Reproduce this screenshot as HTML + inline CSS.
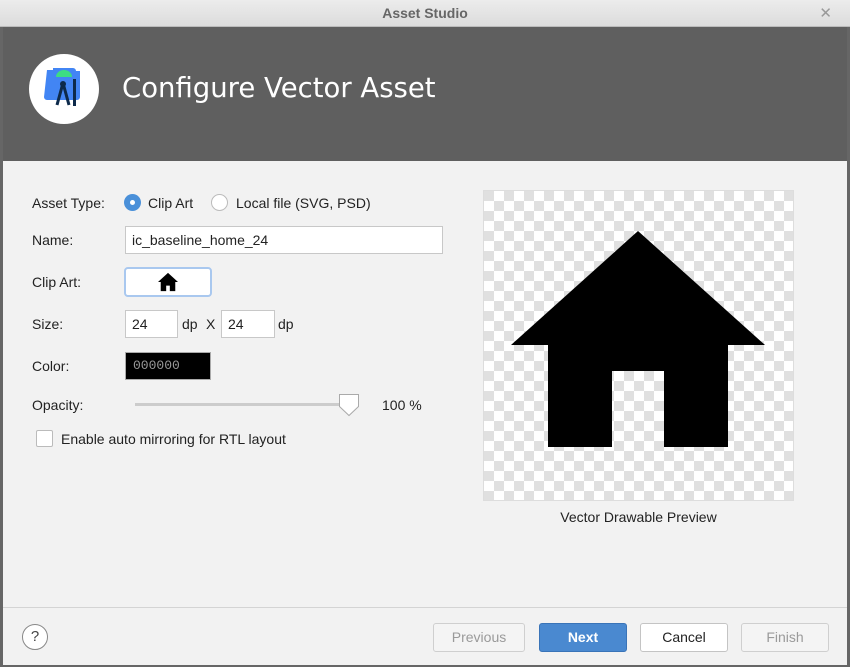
<!DOCTYPE html>
<html><head><style>
*{margin:0;padding:0;box-sizing:border-box}
body{width:850px;height:667px;background:#f2f2f2;font-family:"Liberation Sans",sans-serif;font-size:14px;color:#222;position:relative;overflow:hidden}
.abs{position:absolute}
.lbl{position:absolute;left:32px;font-size:14px}
.inp{position:absolute;background:#fff;border:1px solid #c8c8c8;font-size:14px;padding-left:6px;line-height:26px}
.btn{position:absolute;top:623px;height:29px;border:1px solid #cfcfcf;border-radius:3px;text-align:center;line-height:27px;font-size:14px;background:#f4f4f4;color:#9a9a9a}
</style></head><body>
<div class="abs" style="left:0;top:0;width:850px;height:27px;background:linear-gradient(#ececec,#dcdcdc);border-bottom:1px solid #bbb;text-align:center;line-height:27px;font-weight:bold;color:#666;font-size:14px">Asset Studio</div>
<div class="abs" style="right:18px;top:4px;color:#999;font-size:15px">✕</div>
<div class="abs" style="left:0;top:27px;width:3px;height:640px;background:#666"></div>
<div class="abs" style="right:0;top:27px;width:3px;height:640px;background:#666"></div>
<div class="abs" style="left:0;bottom:0;width:850px;height:2px;background:#666"></div>
<div class="abs" style="left:3px;top:27px;width:844px;height:134px;background:#5f5f5f"></div>
<div class="abs" style="left:29px;top:54px;width:70px;height:70px;border-radius:50%;background:#fff"></div>
<svg class="abs" style="left:29px;top:54px" width="70" height="70" viewBox="0 0 70 70">
<path d="M18 16 h6 v-2 h20 a3 3 0 0 1 3 3 v0 h4 v26 a3 3 0 0 1 -3 3 h-30 a3 3 0 0 1 -3 -3 z" fill="#4285f4"/>
<path d="M27 23 a8 7 0 0 1 16 0 z" fill="#3ddc84"/>
<path d="M34 29 l-6 22 M34 29 l6 22" stroke="#0d2a4b" stroke-width="3" fill="none"/>
<rect x="44" y="25" width="3" height="27" fill="#0d2a4b"/>
<circle cx="34" cy="30" r="3" fill="#0d2a4b"/>
</svg>
<div class="abs" style="left:122px;top:72px;font-size:27.5px;color:#fff;font-family:'DejaVu Sans',sans-serif">Configure Vector Asset</div>
<div class="lbl" style="top:195px">Asset Type:</div>
<div class="abs" style="left:124px;top:194px;width:17px;height:17px;border-radius:50%;background:#4a90d9"><div style="margin:6px;width:5px;height:5px;border-radius:50%;background:#fff"></div></div>
<div class="abs" style="left:148px;top:195px">Clip Art</div>
<div class="abs" style="left:211px;top:194px;width:17px;height:17px;border-radius:50%;background:#fff;border:1px solid #bbb"></div>
<div class="abs" style="left:236px;top:195px">Local file (SVG, PSD)</div>
<div class="lbl" style="top:232px">Name:</div>
<div class="inp" style="left:125px;top:226px;width:318px;height:28px">ic_baseline_home_24</div>
<div class="lbl" style="top:274px">Clip Art:</div>
<div class="abs" style="left:124px;top:267px;width:88px;height:30px;background:#fff;border:2px solid #a9c8ef;border-radius:4px"></div>
<svg class="abs" style="left:157px;top:272px" width="22" height="20" viewBox="0 0 24 22"><path d="M12 1 L1 11 h3 v10 h6 v-6 h4 v6 h6 v-10 h3z" fill="#000"/></svg>
<div class="lbl" style="top:316px">Size:</div>
<div class="inp" style="left:125px;top:310px;width:53px;height:28px">24</div>
<div class="abs" style="left:182px;top:316px">dp</div>
<div class="abs" style="left:206px;top:316px">X</div>
<div class="inp" style="left:221px;top:310px;width:54px;height:28px">24</div>
<div class="abs" style="left:278px;top:316px">dp</div>
<div class="lbl" style="top:358px">Color:</div>
<div class="abs" style="left:125px;top:352px;width:86px;height:28px;background:#000;border:1px solid #aaa;color:#999;font-family:'Liberation Mono',monospace;font-size:13px;line-height:26px;padding-left:7px">000000</div>
<div class="lbl" style="top:397px">Opacity:</div>
<div class="abs" style="left:135px;top:403px;width:215px;height:3px;background:#ccc"></div>
<svg class="abs" style="left:338px;top:393px" width="22" height="24"><path d="M1.5 1.5 h19 v12 l-9.5 9 l-9.5 -9z" fill="#fff" stroke="#aaa"/></svg>
<div class="abs" style="left:382px;top:397px">100 %</div>
<div class="abs" style="left:36px;top:430px;width:17px;height:17px;background:#fff;border:1px solid #bbb;border-radius:2px"></div>
<div class="abs" style="left:61px;top:431px">Enable auto mirroring for RTL layout</div>
<div class="abs" style="left:483px;top:190px;width:311px;height:311px;border:1px solid #ddd;background-color:#fff;background-image:linear-gradient(45deg,#e0e0e0 25%,transparent 25%,transparent 75%,#e0e0e0 75%),linear-gradient(45deg,#e0e0e0 25%,transparent 25%,transparent 75%,#e0e0e0 75%);background-size:20px 20px;background-position:10px 0,0 10px"></div>
<svg class="abs" style="left:483px;top:190px" width="311" height="311"><path d="M155 41 L28 155 h37 v102 h64 v-76 h52 v76 h64 v-102 h37 z" fill="#000"/></svg>
<div class="abs" style="left:483px;top:509px;width:311px;text-align:center">Vector Drawable Preview</div>
<div class="abs" style="left:3px;top:607px;width:844px;height:1px;background:#d4d4d4"></div>
<div class="abs" style="left:22px;top:624px;width:26px;height:26px;border-radius:50%;border:1px solid #888;background:#fff;text-align:center;line-height:24px;font-size:15px;color:#444">?</div>
<div class="btn" style="left:433px;width:92px">Previous</div>
<div class="btn" style="left:539px;width:88px;background:#4a89d0;border-color:#3a74b8;color:#fff;font-weight:bold">Next</div>
<div class="btn" style="left:640px;width:88px;background:#fff;border-color:#c4c4c4;color:#222">Cancel</div>
<div class="btn" style="left:741px;width:88px">Finish</div>
</body></html>
